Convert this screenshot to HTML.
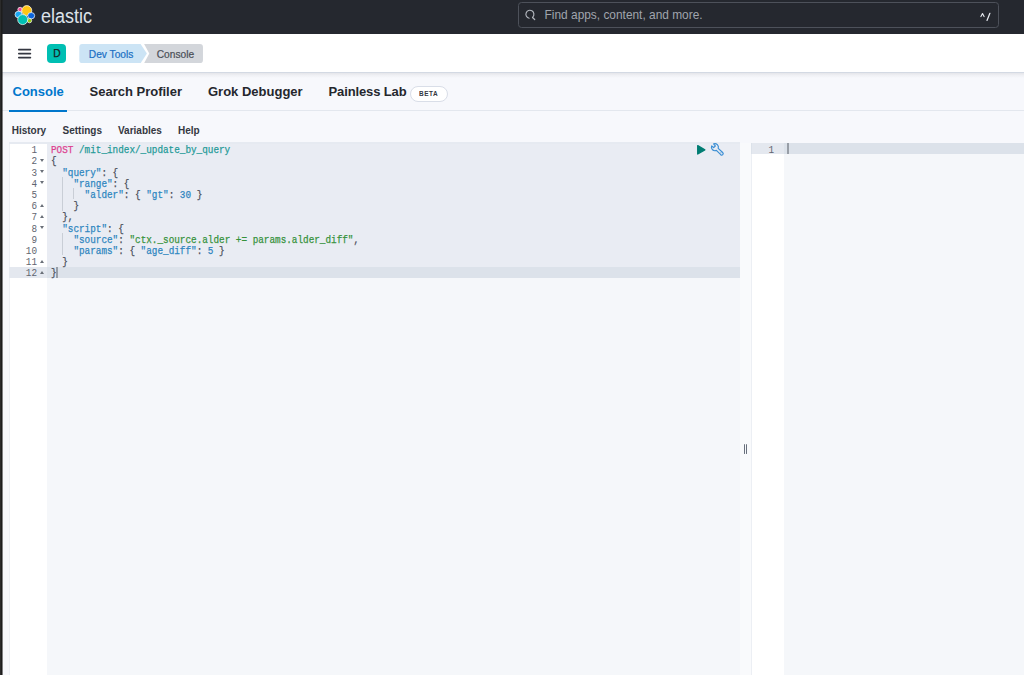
<!DOCTYPE html>
<html><head><meta charset="utf-8">
<style>
*{box-sizing:border-box;margin:0;padding:0}
html,body{width:1024px;height:675px;overflow:hidden;background:#f7f8fc;font-family:"Liberation Sans",sans-serif;}
.abs{position:absolute}
#strip{left:0;top:0;width:3px;height:675px;background:linear-gradient(90deg,#2b2b2b 0,#2b2b2b 1px,#1d1d1d 1px,#1d1d1d 2px,rgba(29,29,29,.55) 2px,rgba(29,29,29,.55) 3px);z-index:10}
#hdr{left:0;top:0;width:1024px;height:34px;background:#25282f}
#search{left:518px;top:2.3px;width:480.5px;height:25.3px;border:1px solid #4d515a;border-radius:3.5px}
#ph{left:544.6px;top:7.3px;font-size:11.9px;line-height:16px;color:#a0a5ad;white-space:nowrap}
#kbd{left:980px;top:8px;font-size:10px;color:#dfe5ef;font-weight:bold}
#logotext{left:40.8px;top:3.6px;font-size:19.5px;line-height:24px;color:#dde2ea;transform:scaleX(0.923);transform-origin:0 0}
#bc{left:0;top:34px;width:1024px;height:38px;background:#fff}
#bcb{left:0;top:72px;width:1024px;height:1.2px;background:#d3d9e3}
#bcs{left:0;top:73.2px;width:1024px;height:5px;background:linear-gradient(rgba(40,40,50,.09),rgba(40,40,50,.035) 50%,rgba(40,40,50,0))}
.hb{left:18px;width:13.2px;height:1.75px;background:#343741;border-radius:1px}
#av{left:47px;top:44px;width:19px;height:19px;padding-left:0.8px;border-radius:4px;background:#00bfb3;color:#1a1c21;font-size:10.2px;font-weight:normal;-webkit-text-stroke:0.25px #1a1c21;line-height:19.5px;text-align:center}
.tab{top:83.1px;font-size:13px;line-height:18px;font-weight:bold;color:#25272d;white-space:nowrap}
#tabline{left:2px;top:110px;width:1022px;height:1px;background:#e3e7ee}
#tabul{left:8.8px;top:109.7px;width:58.4px;height:2px;background:#0077cc}
.menu{top:124.3px;font-size:10px;line-height:14px;font-weight:bold;color:#343741;white-space:nowrap}
#beta{left:410.2px;top:85.5px;width:38.2px;height:16px;border:1px solid #d9dee8;border-radius:8px;background:#fff}
#betat{left:419.2px;top:90.3px;font-size:8.1px;line-height:8px;font-weight:bold;color:#343741;letter-spacing:0.6px;transform:scaleX(0.8);transform-origin:0 0;white-space:nowrap}


#ed{left:9px;top:142.5px;width:731px;height:533px;background:#f5f7fa}
#gut{left:9px;top:142.5px;width:38.3px;height:533px;background:#fff;border-left:1px solid #eef0f5}
#edtop{left:9px;top:142.2px;width:731px;height:1.6px;background:#e6eaf1}
#sel{left:47.3px;top:143.4px;width:692.7px;height:123.20px;background:#e9ecf3}
#act{left:47.3px;top:266.60px;width:692.7px;height:11.2px;background:#dce2ea}
#gact{left:9px;top:266.60px;width:38.3px;height:11.2px;background:#e4e8ef}
.ln{position:absolute;left:50.7px;height:11.2px;font-family:"Liberation Mono",monospace;font-size:11.2px;line-height:11.2px;white-space:pre;color:#4a4f5a;-webkit-text-stroke:0.25px currentColor;transform:scaleX(0.8342);transform-origin:0 0}
.num{position:absolute;width:30px;text-align:right;height:11.2px;font-family:"Liberation Mono",monospace;font-size:11.2px;line-height:11.2px;color:#5f6570;transform:scaleX(0.8342);transform-origin:100% 0}
.m{color:#dd408f}.u{color:#1f9a98}.k{color:#2d86c0}.s{color:#36923c}.n{color:#2f84bf}
.fd{position:absolute;left:39.8px;width:0;height:0;border-left:2.3px solid transparent;border-right:2.3px solid transparent}
.fd.dn{border-top:3px solid #6a6f78}
.fd.up{border-bottom:3px solid #6a6f78}
.ig{position:absolute;width:1px;background:#c9ced6}
#rsz{left:740px;top:142.5px;width:11.3px;height:533px;background:#f9fafc}
.hbar{top:443.9px;width:1.5px;height:10px;background:#69707d;border-radius:.7px}
#out{left:751.3px;top:142.5px;width:273px;height:533px;background:#f5f7fa}
#ogut{left:751.3px;top:142.5px;width:32.7px;height:533px;background:#fff;border-left:1px solid #eceff4}
#oact{left:751.3px;top:143.4px;width:273px;height:11px;background:#dce2ea}
#ogact{left:752.3px;top:143.4px;width:31.7px;height:11px;background:#e4e8ef}
#ocur{left:786.8px;top:143.4px;width:1.8px;height:11px;background:#989ea7}
#cur{left:55.81px;top:266.60px;width:1.8px;height:11.2px;background:#989ea7}
</style></head><body>
<div id="strip" class="abs"></div>
<div id="hdr" class="abs"></div>
<div id="logotext" class="abs">elastic</div>
<div id="search" class="abs"></div>
<svg class="abs" style="left:0;top:0" width="40" height="34" viewBox="0 0 40 34">
<g stroke="#fff" stroke-width="0.7">
<circle cx="20.1" cy="9.6" r="2.3" fill="#f04e98"/>
<ellipse cx="18.6" cy="14.5" rx="3.6" ry="3.3" fill="#1ba9f5"/>
<circle cx="26.8" cy="10.6" r="5.0" fill="#fec514"/>
<ellipse cx="31.2" cy="15.7" rx="3.5" ry="3.2" fill="#0b64dd"/>
<circle cx="29.5" cy="20.6" r="2.2" fill="#93c90e"/>
<circle cx="22.7" cy="19.6" r="5.0" fill="#00bfb3"/>
</g></svg>
<svg class="abs" style="left:518px;top:5px" width="24" height="20" viewBox="518 5 24 20">
<path d="M529.2 18.24 A4.0 4.0 0 1 1 532.96 16.87" fill="none" stroke="#b3b7be" stroke-width="1.15" stroke-linecap="round"/>
<line x1="532.5" y1="17.5" x2="534.7" y2="19.5" stroke="#b3b7be" stroke-width="1.2" stroke-linecap="round"/>
</svg>
<div id="ph" class="abs">Find apps, content, and more.</div>
<svg class="abs" style="left:970px;top:0" width="30" height="34" viewBox="970 0 30 34"><polyline points="980.9,16.6 982.5,13.6 984.1,16.6" fill="none" stroke="#e6e9ee" stroke-width="1.15" stroke-linecap="round" stroke-linejoin="round"/><line x1="987" y1="20.4" x2="989.9" y2="13.3" stroke="#e6e9ee" stroke-width="1.25" stroke-linecap="round"/></svg>

<div id="bc" class="abs"></div><div id="bcb" class="abs"></div><div id="bcs" class="abs"></div>
<svg class="abs" style="left:16px;top:46px" width="17" height="14" viewBox="16 46 17 14"><g fill="#343741"><rect x="18" y="48.8" width="13.2" height="1.7" rx=".8"/><rect x="18" y="52.8" width="13.2" height="1.7" rx=".8"/><rect x="18" y="56.8" width="13.2" height="1.7" rx=".8"/></g></svg>
<div id="av" class="abs">D</div>
<svg class="abs" style="left:79px;top:43.8px" width="125" height="19.2" viewBox="0 0 125 19.2">
<path d="M3 0 H61.6 L67.9 9.6 L61.6 19.2 H3 Q0.3 19.2 0.3 16.2 V3 Q0.3 0 3 0Z" fill="#cce4f5"/>
<path d="M65.1 0 H121 Q124 0 124 3 V16.2 Q124 19.2 121 19.2 H65.1 L70.3 9.6Z" fill="#d3d6db"/>
</svg>
<div class="abs" style="left:88.8px;top:47.5px;font-size:10.2px;line-height:13px;color:#1a6fc4;-webkit-text-stroke:0.2px currentColor">Dev Tools</div>
<div class="abs" style="left:156.7px;top:47.5px;font-size:10.2px;line-height:13px;color:#4a4e56;-webkit-text-stroke:0.2px currentColor">Console</div>

<div class="abs tab" style="left:12.5px;color:#0077cc">Console</div>
<div class="abs tab" style="left:89.5px">Search Profiler</div>
<div class="abs tab" style="left:208px">Grok Debugger</div>
<div class="abs tab" style="left:328.5px;letter-spacing:-0.12px">Painless Lab</div>
<div id="beta" class="abs"></div><div id="betat" class="abs">BETA</div>
<div id="tabline" class="abs"></div>
<div id="tabul" class="abs"></div>

<div class="abs menu" style="left:11.7px">History</div>
<div class="abs menu" style="left:62.5px">Settings</div>
<div class="abs menu" style="left:118px">Variables</div>
<div class="abs menu" style="left:178px">Help</div>
<div id="ed" class="abs"></div><div id="gut" class="abs"></div><div id="sel" class="abs"></div><div id="act" class="abs"></div><div id="gact" class="abs"></div><div id="edtop" class="abs"></div>
<div class="num" style="left:6.5px;top:145.10px">1</div>
<div class="ln" style="top:145.10px"><span class="m">POST</span> <span class="u">/mit_index/_update_by_query</span></div>
<div class="num" style="left:6.5px;top:156.30px">2</div>
<div class="fd dn" style="top:158.95px"></div>
<div class="ln" style="top:156.30px">{</div>
<div class="num" style="left:6.5px;top:167.50px">3</div>
<div class="fd dn" style="top:170.15px"></div>
<div class="ln" style="top:167.50px">  <span class="k">"query"</span>: {</div>
<div class="num" style="left:6.5px;top:178.70px">4</div>
<div class="fd dn" style="top:181.35px"></div>
<div class="ln" style="top:178.70px">    <span class="k">"range"</span>: {</div>
<div class="num" style="left:6.5px;top:189.90px">5</div>
<div class="ln" style="top:189.90px">      <span class="k">"alder"</span>: { <span class="k">"gt"</span>: <span class="n">30</span> }</div>
<div class="num" style="left:6.5px;top:201.10px">6</div>
<div class="fd up" style="top:203.75px"></div>
<div class="ln" style="top:201.10px">    }</div>
<div class="num" style="left:6.5px;top:212.30px">7</div>
<div class="fd up" style="top:214.95px"></div>
<div class="ln" style="top:212.30px">  },</div>
<div class="num" style="left:6.5px;top:223.50px">8</div>
<div class="fd dn" style="top:226.15px"></div>
<div class="ln" style="top:223.50px">  <span class="k">"script"</span>: {</div>
<div class="num" style="left:6.5px;top:234.70px">9</div>
<div class="ln" style="top:234.70px">    <span class="k">"source"</span>: <span class="s">"ctx._source.alder += params.alder_diff"</span>,</div>
<div class="num" style="left:6.5px;top:245.90px">10</div>
<div class="ln" style="top:245.90px">    <span class="k">"params"</span>: { <span class="k">"age_diff"</span>: <span class="n">5</span> }</div>
<div class="num" style="left:6.5px;top:257.10px">11</div>
<div class="fd up" style="top:259.75px"></div>
<div class="ln" style="top:257.10px">  }</div>
<div class="num" style="left:6.5px;top:268.30px">12</div>
<div class="fd up" style="top:270.95px"></div>
<div class="ln" style="top:268.30px">}</div>
<div class="ig" style="left:61.61px;top:177.00px;height:33.60px"></div>
<div class="ig" style="left:72.82px;top:188.20px;height:11.20px"></div>
<div class="ig" style="left:61.61px;top:233.00px;height:22.40px"></div>
<div id="cur" class="abs"></div>
<svg class="abs" style="left:694px;top:142px" width="14" height="16" viewBox="694 142 14 16">
<path d="M697.75 145.7 L697.75 154.0 L704.8 149.85Z" fill="#017d73" stroke="#017d73" stroke-width="1.4" stroke-linejoin="round"/>
</svg>
<svg class="abs" style="left:708px;top:141px" width="19" height="17" viewBox="708 141 19 17">
<path d="M718.20 148.36 L722.67 152.52 A1.45 1.45 0 0 1 720.73 154.68 L716.40 150.36 A3.5 3.5 0 0 1 711.63 145.95 L713.66 147.59 L715.29 145.96 L713.65 143.93 A3.5 3.5 0 0 1 718.20 148.36Z" fill="none" stroke="#3d8fd4" stroke-width="1.2" stroke-linejoin="round"/>
<circle cx="720.90" cy="152.80" r="0.55" fill="#3d8fd4"/>
</svg>
<div id="rsz" class="abs"></div><div class="abs hbar" style="left:743.5px"></div><div class="abs hbar" style="left:745.8px"></div>
<div id="out" class="abs"></div><div id="ogut" class="abs"></div><div id="oact" class="abs"></div><div id="ogact" class="abs"></div>
<div class="num" style="left:743.6px;top:145.10px">1</div>
<div id="ocur" class="abs"></div>
</body></html>
